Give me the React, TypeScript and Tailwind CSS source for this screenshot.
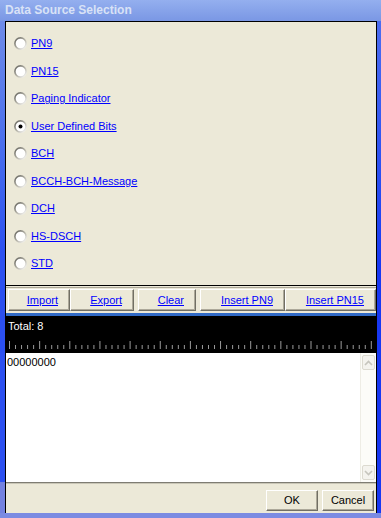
import React, { useState } from 'react';

const sources = [
  'PN9',
  'PN15',
  'Paging Indicator',
  'User Defined Bits',
  'BCH',
  'BCCH-BCH-Message',
  'DCH',
  'HS-DSCH',
  'STD',
];

const tools = [
  { label: 'Import', w: 'w-[62px]', ml: 'ml-[2px]' },
  { label: 'Export', w: 'w-[64px]', ml: 'ml-0' },
  { label: 'Clear', w: 'w-[58px]', ml: 'ml-[4px]' },
  { label: 'Insert PN9', w: 'w-[85px]', ml: 'ml-[4px]' },
  { label: 'Insert PN15', w: 'w-[91px]', ml: 'ml-0' },
];

const Radio = ({ checked }: { checked: boolean }) => (
  <svg width="13" height="13" viewBox="0 0 13 13" className="shrink-0">
    <defs>
      <linearGradient id="ring" x1="0" y1="0" x2="1" y2="1">
        <stop offset="0" stopColor="#5e5e58" />
        <stop offset="0.55" stopColor="#b8b6ac" />
        <stop offset="1" stopColor="#ffffff" />
      </linearGradient>
    </defs>
    <circle cx="6.5" cy="6.5" r="5.6" fill="#ffffff" stroke="url(#ring)" strokeWidth="1.6" />
    {checked && <circle cx="6.5" cy="6.5" r="2" fill="#000000" />}
  </svg>
);

const Ruler = () => {
  const ticks = [];
  for (let i = 0; i < 62; i++) {
    const x = 3.5 + i * 6.03;
    const long = i % 5 === 0;
    ticks.push(
      <line key={i} x1={x} x2={x} y1={long ? 25 : 29} y2={33} stroke="#9a9a9a" strokeWidth="1" />
    );
  }
  return (
    <svg width="370" height="37" className="absolute left-0 top-0">
      {ticks}
    </svg>
  );
};

export default function App() {
  const [selected, setSelected] = useState(3);

  return (
    <div className="flex h-[518px] w-[381px] flex-col bg-[#7b8be2] font-['Liberation_Sans',Arial,sans-serif] text-[11px] leading-[13px]">
      <div className="flex h-[21px] items-center bg-gradient-to-b from-[#94afef] to-[#7a97e4] pl-[5px] text-[12px] font-bold text-[#d9e2f6]">
        Data Source Selection
      </div>

      <div className="flex min-h-0 flex-1">
        <div className="flex w-[5px] flex-col">
          <div className="h-[461px] bg-gradient-to-b from-[#6f8be8] via-[#2c50f0] to-[#2c50f0]" />
          <div className="flex-1 bg-[#7482e0]" />
        </div>

        <div className="flex w-[372px] flex-col border-x border-black bg-[#ece9d8]">
          <div className="h-[265px] border-y border-black pt-[8px] pl-[8px]">
            {sources.map((s, i) => (
              <label
                key={s}
                onClick={() => setSelected(i)}
                className="flex h-[27.5px] cursor-pointer items-center gap-[4px]"
              >
                <Radio checked={selected === i} />
                <span className="text-[#0000ff] underline">{s}</span>
              </label>
            ))}
          </div>

          <div className="h-[27px] pt-[1px]">
            <div className="h-px bg-[#aca899]" />
            <div className="mt-px flex h-[22px]">
              {tools.map((t) => (
                <button
                  key={t.label}
                  className={`${t.w} ${t.ml} flex h-[22px] items-center justify-end border border-b-[#716f64] border-l-white border-r-[#716f64] border-t-white bg-[#ece9d8] pr-[11px] text-[#0000ff] underline shadow-[inset_-1px_-1px_0_#aca899]`}
                >
                  {t.label}
                </button>
              ))}
            </div>
          </div>

          <div className="h-[3px] bg-[#316ac5]" />

          <div className="relative h-[37px] bg-black pl-[2px] pt-[4px] text-white">
            <Ruler />
            <span className="relative">Total: 8</span>
          </div>

          <div className="flex h-[129px] bg-white">
            <div className="flex-1 pl-[1px] pt-[3px] text-black">00000000</div>
            <div className="flex w-[16px] flex-col justify-between border-l border-[#eeede5] bg-[#fcfcf8] px-px py-[2px]">
              <div className="flex h-[15px] items-center justify-center rounded-[2px] border border-[#dcdad0] bg-[#f4f3ee]">
                <svg width="9" height="6" viewBox="0 0 9 6">
                  <path d="M1 5 L4.5 1.5 L8 5" fill="none" stroke="#c6c5bd" strokeWidth="1.6" />
                </svg>
              </div>
              <div className="flex h-[15px] items-center justify-center rounded-[2px] border border-[#dcdad0] bg-[#f4f3ee]">
                <svg width="9" height="6" viewBox="0 0 9 6">
                  <path d="M1 1 L4.5 4.5 L8 1" fill="none" stroke="#c6c5bd" strokeWidth="1.6" />
                </svg>
              </div>
            </div>
          </div>

          <div className="h-px bg-[#7e7c72]" />
          <div className="h-px bg-[#c9c6b6]" />

          <div className="flex flex-1 items-start justify-end gap-[4px] pr-[2px] pt-[6px]">
            <button className="flex h-[21px] w-[52px] items-center justify-center border border-b-[#716f64] border-l-white border-r-[#716f64] border-t-white bg-[#ece9d8] text-black shadow-[inset_-1px_-1px_0_#aca899]">
              OK
            </button>
            <button className="flex h-[21px] w-[52px] items-center justify-center border border-b-[#716f64] border-l-white border-r-[#716f64] border-t-white bg-[#ece9d8] text-black shadow-[inset_-1px_-1px_0_#aca899]">
              Cancel
            </button>
          </div>
        </div>

        <div className="w-[4px] bg-gradient-to-b from-[#4c6cf0] via-[#1838f2] to-[#1838f2]" />
      </div>

      <div className="h-[5px] bg-[#7b8be2]" />
    </div>
  );
}
